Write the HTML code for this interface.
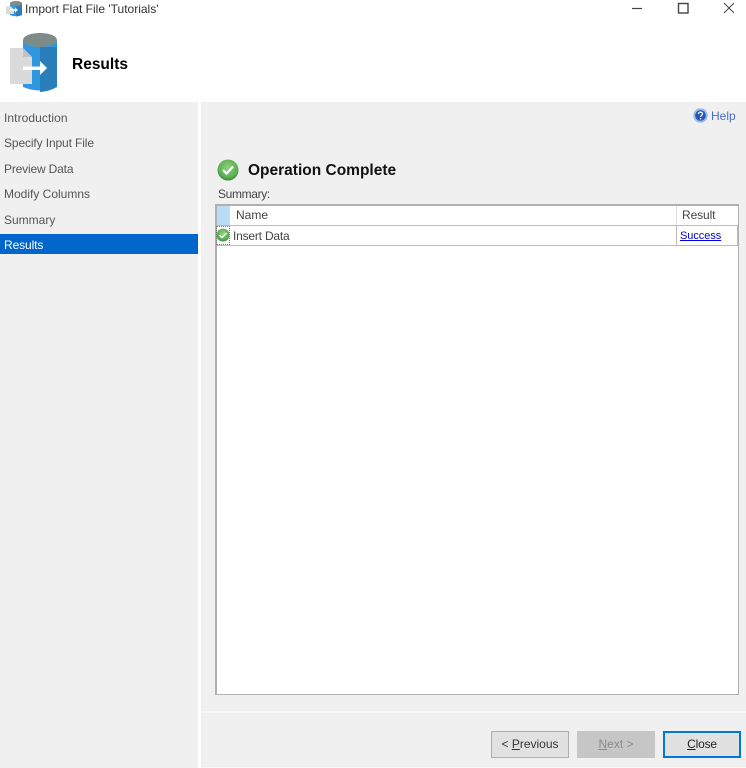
<!DOCTYPE html>
<html lang="en">
<head>
<meta charset="utf-8">
<title>Import Flat File 'Tutorials'</title>
<style>
html,body{margin:0;padding:0;background:#fff}
body{position:relative;width:746px;height:768px;overflow:hidden;font-family:"Liberation Sans",sans-serif;font-size:12px;color:#444;filter:blur(.3px)}
.a{position:absolute;white-space:nowrap}
.nav{left:4px;height:20px;line-height:20px;color:#555}
.btn{box-sizing:border-box;height:27px;line-height:25px;text-align:center;border:1px solid #adadad;background:#e1e1e1;color:#333;top:731px;width:78px}
u{text-decoration:underline}
</style>
</head>
<body>
<div class="a" style="left:25px;top:1px;height:16px;line-height:16px;color:#333">Import Flat File 'Tutorials'</div>
<svg class="a" style="left:6px;top:0;" width="18" height="18" viewBox="0 0 18 18">
<path d="M4 2.500h12v12.500q-6 2.500-12 0z" fill="#2f96e0"/>
<path d="M10 3h6v12q-3 1.300-6 1.500z" fill="#2a7fba"/>
<ellipse cx="10" cy="3.500" rx="6" ry="2.500" fill="#7e8b8b"/>
<path d="M0 6.500h5l3 3V14H0z" fill="#dadada"/>
<path d="M4 9.300h5V7.500l3 2.500-3 2.500v-1.800H4z" fill="#fff"/>
</svg>
<svg class="a" style="left:632px;top:2px" width="108" height="14" viewBox="0 0 108 14" fill="none" stroke="#444">
<path d="M0 6.500h10" stroke-width="1.200"/>
<rect x="46.500" y="1.500" width="9.500" height="9.500" stroke-width="1.400"/>
<path d="M92 1l10 10M102 1L92 11" stroke-width="1"/>
</svg>
<svg class="a" style="left:10px;top:33px" width="50" height="62" viewBox="0 0 50 62">
<path d="M13 7h34v47q-17 7-34 0z" fill="#2f96e0"/>
<path d="M30 14h17v40q-8 4.500-17 5z" fill="#2a7fba"/>
<ellipse cx="30" cy="7" rx="17" ry="7" fill="#7e8b8b"/>
<path d="M0 15h13l9 9v27H0z" fill="#dadada"/>
<path d="M13 15v9h9z" fill="#c2c2c2"/>
<path d="M13 33.500h17V28l7 7-7 7v-5H13z" fill="#fff"/>
</svg>
<div class="a" style="left:72px;top:55px;height:20px;line-height:20px;font-size:15.500px;font-weight:bold;color:#000">Results</div>

<div class="a" style="left:0;top:102px;width:198px;height:666px;background:#f0f0f0"></div>
<div class="a nav" style="top:108px;letter-spacing:.08px">Introduction</div>
<div class="a nav" style="top:133px;letter-spacing:-.12px">Specify Input File</div>
<div class="a nav" style="top:159px;letter-spacing:-.17px">Preview Data</div>
<div class="a nav" style="top:184px">Modify Columns</div>
<div class="a nav" style="top:210px">Summary</div>
<div class="a" style="left:0;top:234px;width:198px;height:20px;background:#0066cc"></div>
<div class="a nav" style="top:235px;color:#fff;letter-spacing:-.1px">Results</div>

<div class="a" style="left:201px;top:102px;width:545px;height:666px;background:#f0f0f0"></div>
<div class="a" style="left:201px;top:711px;width:545px;height:2px;background:#f8f8f8"></div>
<div class="a" style="left:201px;top:767px;width:545px;height:1px;background:#f8f8f8"></div>

<svg class="a" style="left:693px;top:108px" width="15" height="15" viewBox="0 0 15 15">
<circle cx="7.500" cy="7.500" r="7.200" fill="#9dbbe2"/>
<circle cx="7.500" cy="7.500" r="5.300" fill="#2458bb"/>
<path d="M5.500 6c0-2.500 4-2.500 4 0 0 1.500-2 1.500-2 3" fill="none" stroke="#fff" stroke-width="1.300"/>
<rect x="6.900" y="10" width="1.300" height="1.400" fill="#fff"/>
</svg>
<div class="a" style="left:711px;top:107px;height:18px;line-height:18px;color:#4a6fc8">Help</div>

<svg class="a" style="left:217px;top:159px" width="22" height="22" viewBox="0 0 22 22">
<defs><radialGradient id="g" cx="50%" cy="40%" r="60%"><stop offset="0" stop-color="#8fd080"/><stop offset=".75" stop-color="#5cb050"/><stop offset="1" stop-color="#2f8a35"/></radialGradient></defs>
<circle cx="11" cy="11" r="10.500" fill="url(#g)"/>
<path d="M6 11l3.500 3.500L16 7.500" fill="none" stroke="#fff" stroke-width="2.200"/>
</svg>
<div class="a" style="left:248px;top:161px;height:20px;line-height:20px;font-size:15.500px;font-weight:bold;color:#111">Operation Complete</div>
<div class="a" style="left:218px;top:186px;height:16px;line-height:16px;color:#444;letter-spacing:-.35px">Summary:</div>

<div class="a" style="left:215px;top:204px;box-sizing:border-box;width:524px;height:491px;background:#fff;border:1px solid #b0b0b0;border-top-width:2px;border-left-width:2px"></div>
<div class="a" style="left:217px;top:206px;width:13px;height:19px;background:#bcdcf5"></div>
<div class="a" style="left:217px;top:225px;width:521px;height:1px;background:#bbb"></div>
<div class="a" style="left:217px;top:245px;width:521px;height:1px;background:#bbb"></div>
<div class="a" style="left:676px;top:206px;width:1px;height:19px;background:#ddd"></div>
<div class="a" style="left:676px;top:226px;width:1px;height:19px;background:#bbb"></div>
<div class="a" style="left:737px;top:226px;width:1px;height:19px;background:#bbb"></div>
<div class="a" style="left:236px;top:207px;height:16px;line-height:16px;color:#444">Name</div>
<div class="a" style="left:682px;top:207px;height:16px;line-height:16px;color:#444;letter-spacing:-.1px">Result</div>
<div class="a" style="left:216px;top:226px;box-sizing:border-box;width:14px;height:19px;border:1px dotted #777"></div>
<svg class="a" style="left:216px;top:228px" width="14" height="14" viewBox="0 0 14 14">
<circle cx="7" cy="7" r="6.500" fill="url(#g)"/>
<path d="M3.500 7l2.500 2.500L10.500 5" fill="none" stroke="#fff" stroke-width="1.500"/>
</svg>
<div class="a" style="left:233px;top:228px;height:16px;line-height:16px;color:#444;letter-spacing:-.2px">Insert Data</div>
<div class="a" style="left:680px;top:228px;height:16px;line-height:16px;font-size:11px;color:#0000e0;text-decoration:underline;letter-spacing:-.05px">Success</div>

<div class="a btn" style="left:491px">&lt; <u>P</u>revious</div>
<div class="a btn" style="left:577px;background:#c6c6c6;border-color:#c6c6c6;color:#8a8a8a"><u>N</u>ext &gt;</div>
<div class="a btn" style="left:663px;border:2px solid #0078d7;line-height:23px;color:#222;letter-spacing:-.2px"><u>C</u>lose</div>
</body>
</html>
